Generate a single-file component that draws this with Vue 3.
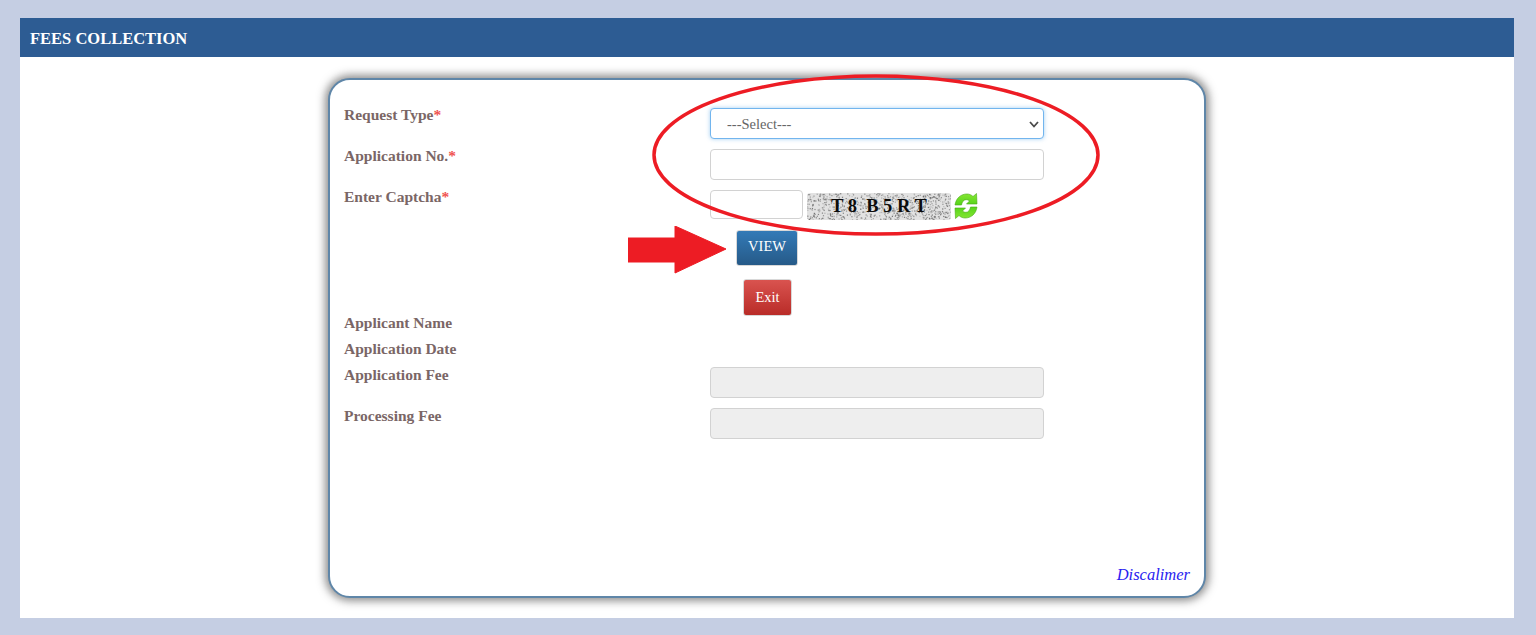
<script setup>
// noise specks for the captcha picture
const specks = [];
let seed = 7;
function rnd() {
	seed = (seed * 16807) % 2147483647;
	return seed / 2147483647;
}
for (let i = 0; i < 800; i++) {
	specks.push({ x: rnd() * 144, y: rnd() * 27, o: 0.2 + rnd() * 0.7 });
}
</script>

<template>
	<div class="page">
		<div class="panel">
			<div class="panel_head">FEES COLLECTION</div>
			<div class="panel_body">
				<div class="card">
					<div class="row">
						<label>Request Type<span class="req">*</span></label>
						<div class="control select_wrap">
							<select class="input focused">
								<option>---Select---</option>
							</select>
							<svg class="chevron" width="10" height="7" viewBox="0 0 10 7">
								<path d="M1 1 L5 5.5 L9 1" fill="none" stroke="#4a4a4a" stroke-width="1.8" />
							</svg>
						</div>
					</div>
					<div class="row">
						<label>Application No.<span class="req">*</span></label>
						<div class="control">
							<input class="input" type="text">
						</div>
					</div>
					<div class="row captcha_row">
						<label>Enter Captcha<span class="req">*</span></label>
						<div class="control captcha">
							<input class="input small" type="text">
							<div class="captcha_img">
								<svg width="144" height="27" viewBox="0 0 144 27">
									<rect width="144" height="27" fill="#e2e2e2" />
									<rect v-for="(s, i) in specks" :key="i" :x="s.x" :y="s.y" width="1.2" height="1.2" fill="#6a6a6a" :opacity="s.o" />
								</svg>
								<span>T 8 &nbsp;B 5 R T</span>
							</div>
							<svg class="refresh" width="24" height="26" viewBox="0 0 24 26">
								<defs>
									<linearGradient id="green" x1="0" y1="0" x2="0" y2="1">
										<stop offset="0" stop-color="#86e632" />
										<stop offset="1" stop-color="#55d41a" />
									</linearGradient>
								</defs>
								<path d="M1 12 C2 5 7 1 13 1 C15.5 1 17.5 2 19 3.5 L22.5 .5 L23 11 L12.5 11 L15.5 8 C14.5 7 13.5 6.7 12 6.7 C9.5 6.7 8 9 7.5 12 Z" fill="url(#green)" stroke="#46a814" stroke-width=".6" />
								<path d="M1 12 C2 5 7 1 13 1 C15.5 1 17.5 2 19 3.5 L22.5 .5 L23 11 L12.5 11 L15.5 8 C14.5 7 13.5 6.7 12 6.7 C9.5 6.7 8 9 7.5 12 Z" transform="rotate(180 12 13)" fill="url(#green)" stroke="#46a814" stroke-width=".6" />
							</svg>
						</div>
					</div>
					<div class="actions">
						<button class="btn view">VIEW</button>
						<button class="btn exit">Exit</button>
					</div>
					<div class="text_row">Applicant Name</div>
					<div class="text_row last">Application Date</div>
					<div class="row fee_row">
						<label>Application Fee</label>
						<div class="control">
							<input class="input" type="text" disabled>
						</div>
					</div>
					<div class="row fee_row">
						<label>Processing Fee</label>
						<div class="control">
							<input class="input" type="text" disabled>
						</div>
					</div>
					<a class="disclaimer">Discalimer</a>

					<!-- red marks drawn on top of the screenshot -->
					<svg class="ellipse" width="452" height="168" viewBox="0 0 452 168">
						<ellipse cx="226" cy="84" rx="222" ry="79" fill="none" stroke="#ed1c24" stroke-width="3.5" />
					</svg>
					<svg class="arrow" width="100" height="48" viewBox="0 0 100 48">
						<path d="M0 12 H47 V0 L98 23 L47 47 V36 H0 Z" fill="#ed1c24" stroke="#ed1c24" stroke-linejoin="round" />
					</svg>
				</div>
			</div>
		</div>
	</div>
</template>

<style>
html, body {
	margin: 0;
	background: #c5cee3;
}
</style>

<style scoped>
.page {
	height: 635px;
	box-sizing: border-box;
	padding: 18px 22px 17px 20px;
	font-family: "Liberation Serif", "Times New Roman", serif;
	overflow: hidden;
}

.panel {
	height: 600px;
	background: #fff;
	display: flex;
	flex-direction: column;
}

.panel_head {
	height: 39px;
	line-height: 41px;
	padding-left: 10px;
	background: #2d5c93;
	color: #fff;
	font-size: 16.5px;
	font-weight: bold;
}

.panel_body {
	padding-top: 21px;
	display: flex;
	justify-content: center;
}

.card {
	position: relative;
	width: 878px;
	height: 520px;
	box-sizing: border-box;
	padding: 28px 14px 0;
	background: #fff;
	border: 2px solid #5f86a8;
	border-radius: 22px;
	box-shadow: 0 0 9px 3px rgba(50, 50, 50, 0.55);
}

.row {
	display: flex;
	height: 41px;
}

.row label, .text_row {
	width: 366px;
	color: #7a6666;
	font-size: 15.5px;
	font-weight: bold;
	line-height: 13px;
}

.req {
	color: #f0524f;
}

.control {
	width: 334px;
}

.select_wrap {
	position: relative;
	height: 31px;
}

.chevron {
	position: absolute;
	right: 5px;
	top: 13px;
}

.input {
	display: block;
	width: 100%;
	height: 31px;
	box-sizing: border-box;
	padding: 0 13px;
	border: 1px solid #d2d2d2;
	border-radius: 4px;
	background: #fff;
	color: #666;
	font-family: "Liberation Serif", "Times New Roman", serif;
	font-size: 14.5px;
	outline: none;
	appearance: none;
}

.input:disabled {
	background: #eee;
}

.focused {
	padding-left: 16px;
	border-color: #72b5ee;
	box-shadow: 0 0 4px rgba(102, 175, 233, 0.6);
}

.captcha {
	display: flex;
	align-items: center;
	height: 29px;
}

.captcha_row {
	height: 40px;
}

.small {
	width: 93px;
	height: 29px;
	flex: none;
}

.captcha_img {
	position: relative;
	margin-left: 4px;
	margin-top: 4px;
	width: 144px;
	height: 27px;
	border-radius: 3px;
	overflow: hidden;
}

.captcha_img svg {
	display: block;
}

.captcha_img span {
	position: absolute;
	top: 3px;
	left: 24px;
	font-size: 18.5px;
	font-weight: bold;
	color: #0c0c0c;
	white-space: nowrap;
}

.refresh {
	margin-left: 3px;
	margin-top: 2px;
}

.actions {
	display: flex;
	flex-direction: column;
	height: 86px;
	padding-left: 392px;
}

.btn {
	border: 1px solid #d8d8d8;
	border-radius: 3px;
	color: #fff;
	font-family: "Liberation Serif", "Times New Roman", serif;
	font-size: 14.5px;
	padding: 0 0 4px;
}

.view {
	width: 62px;
	height: 36px;
	background: linear-gradient(#337ab7, #265a88);
}

.exit {
	width: 49px;
	height: 37px;
	margin-top: 13px;
	margin-left: 7px;
	padding-bottom: 1px;
	background: linear-gradient(#d9534f, #b92c28);
}

.text_row {
	height: 26px;
}

.text_row.last {
	height: 25px;
}

.fee_row label {
	padding-top: 1px;
}

.disclaimer {
	position: absolute;
	right: 14px;
	bottom: 11px;
	color: #2a1df0;
	font-size: 16.5px;
	font-style: italic;
}

.ellipse {
	position: absolute;
	left: 320px;
	top: -9px;
	pointer-events: none;
}

.arrow {
	position: absolute;
	left: 298px;
	top: 146px;
	pointer-events: none;
}
</style>
